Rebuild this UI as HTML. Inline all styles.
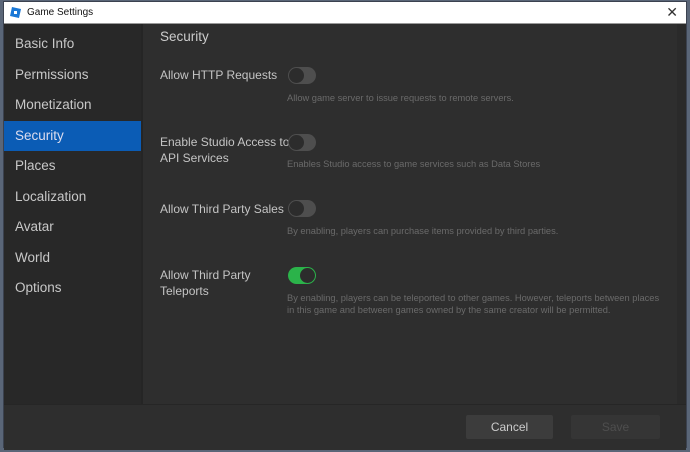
<!DOCTYPE html>
<html><head><style>
body{margin:0;width:690px;height:452px;background:#5a6678;position:relative;overflow:hidden;font-family:"Liberation Sans",sans-serif}
.win{position:absolute;left:3px;top:1px;width:684px;height:447px;background:#2e2e2e;border:1px solid #3b4250;box-sizing:border-box}
.title{position:absolute;left:0;top:0;width:100%;height:22px;background:#fff;border-bottom:1px solid #999;box-sizing:border-box}
.title .t{position:absolute;left:23px;top:5px;font-size:10px;color:#111}
.title .x{position:absolute;right:8px;top:2px;font-size:14px;color:#333}
.side{position:absolute;left:0;top:22px;width:137px;height:380px;background:#282828;border-right:2px solid #252525}
.side div{height:30.5px;line-height:30px;padding-left:11px;font-size:13.5px;color:#c8c8c8}
.side .sel{background:#0b5cb5;color:#dde}
.scroll{position:absolute;right:0;top:22px;width:9px;height:380px;background:#2a2a2a}
.foot{position:absolute;left:0;top:402px;width:100%;height:45px;background:#2e2e2e;border-top:1px solid #262626}
.h{position:absolute;left:160px;top:29px;font-size:13.5px;color:#ccc}
.lbl{position:absolute;left:160px;font-size:12px;color:#c4c4c4;line-height:16px}
.desc{position:absolute;left:287px;font-size:9.3px;color:#6a6a6a;line-height:12px}
.tg{position:absolute;left:288px;width:28px;height:17px;border-radius:9px;background:#4e4e4e}
.tg::after{content:"";position:absolute;left:1px;top:1px;width:15px;height:15px;border-radius:50%;background:#2c2c2c}
.tg.on{background:#2bb34a}
.tg.on::after{left:12px}
.btn{position:absolute;top:415px;height:24px;line-height:24px;text-align:center;font-size:12px;border-radius:2px}
</style></head><body>
<div class="win">
<div class="title"><svg style="position:absolute;left:6px;top:5px" width="11" height="11" viewBox="0 0 11 11"><path d="M2 0L11 2L9 11L0 9Z" fill="#1a78d6"/><rect x="4" y="4" width="3" height="3" fill="#fff"/></svg><span class="t">Game Settings</span><span class="x">✕</span></div>
<div class="side" style="padding-top:5px">
<div>Basic Info</div><div>Permissions</div><div>Monetization</div><div class="sel">Security</div><div>Places</div><div>Localization</div><div>Avatar</div><div>World</div><div>Options</div>
</div>
<div class="scroll"></div>
<div class="foot"></div>
</div>
<div class="h">Security</div>
<div class="lbl" style="top:67px">Allow HTTP Requests</div>
<div class="tg" style="top:67px"></div>
<div class="desc" style="top:92px">Allow game server to issue requests to remote servers.</div>
<div class="lbl" style="top:134px">Enable Studio Access to<br>API Services</div>
<div class="tg" style="top:134px"></div>
<div class="desc" style="top:158px">Enables Studio access to game services such as Data Stores</div>
<div class="lbl" style="top:201px">Allow Third Party Sales</div>
<div class="tg" style="top:200px"></div>
<div class="desc" style="top:225px">By enabling, players can purchase items provided by third parties.</div>
<div class="lbl" style="top:267px">Allow Third Party<br>Teleports</div>
<div class="tg on" style="top:267px"></div>
<div class="desc" style="top:292px">By enabling, players can be teleported to other games. However, teleports between places<br>in this game and between games owned by the same creator will be permitted.</div>
<div class="btn" style="left:466px;width:87px;background:#3c3c3c;color:#ccc">Cancel</div>
<div class="btn" style="left:571px;width:89px;background:#353535;color:#4e4e4e">Save</div>
</body></html>
